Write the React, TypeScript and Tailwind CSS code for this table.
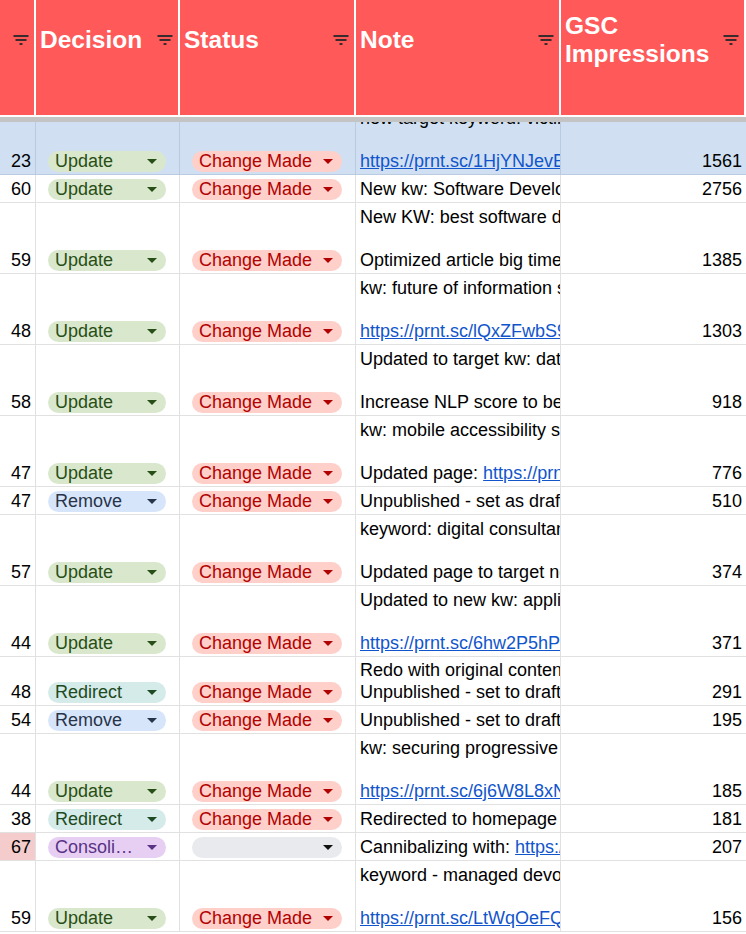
import React from "react";

type Line = { t?: string; l?: string };
type Row = {
  n: number;
  lines: 1 | 2 | 3;
  d: string;
  s?: string;
  note: Line[];
  g: string;
  sel?: boolean;
  flag?: boolean;
};

const rows: Row[] = [
  { n: 23, lines: 3, d: "Update", s: "Change Made", note: [{ t: "new target keyword: victim" }, {}, { l: "https://prnt.sc/1HjYNJevE" }], g: "1561", sel: true },
  { n: 60, lines: 1, d: "Update", s: "Change Made", note: [{ t: "New kw: Software Development" }], g: "2756" },
  { n: 59, lines: 3, d: "Update", s: "Change Made", note: [{ t: "New KW: best software dev" }, {}, { t: "Optimized article big time" }], g: "1385" },
  { n: 48, lines: 3, d: "Update", s: "Change Made", note: [{ t: "kw: future of information sec" }, {}, { l: "https://prnt.sc/lQxZFwbS9x" }], g: "1303" },
  { n: 58, lines: 3, d: "Update", s: "Change Made", note: [{ t: "Updated to target kw: data" }, {}, { t: "Increase NLP score to better" }], g: "918" },
  { n: 47, lines: 3, d: "Update", s: "Change Made", note: [{ t: "kw: mobile accessibility std" }, {}, { t: "Updated page: ", l: "https://prnt.sc" }], g: "776" },
  { n: 47, lines: 1, d: "Remove", s: "Change Made", note: [{ t: "Unpublished - set as draft" }], g: "510" },
  { n: 57, lines: 3, d: "Update", s: "Change Made", note: [{ t: "keyword: digital consultancy" }, {}, { t: "Updated page to target new" }], g: "374" },
  { n: 44, lines: 3, d: "Update", s: "Change Made", note: [{ t: "Updated to new kw: applic" }, {}, { l: "https://prnt.sc/6hw2P5hPi" }], g: "371" },
  { n: 48, lines: 2, d: "Redirect", s: "Change Made", note: [{ t: "Redo with original content" }, { t: "Unpublished - set to draft" }], g: "291" },
  { n: 54, lines: 1, d: "Remove", s: "Change Made", note: [{ t: "Unpublished - set to draft" }], g: "195" },
  { n: 44, lines: 3, d: "Update", s: "Change Made", note: [{ t: "kw: securing progressive web" }, {}, { l: "https://prnt.sc/6j6W8L8xN" }], g: "185" },
  { n: 38, lines: 1, d: "Redirect", s: "Change Made", note: [{ t: "Redirected to homepage" }], g: "181" },
  { n: 67, lines: 1, d: "Consolidate", note: [{ t: "Cannibalizing with: ", l: "https://prnt.sc" }], g: "207", flag: true },
  { n: 59, lines: 3, d: "Update", s: "Change Made", note: [{ t: "keyword - managed devops" }, {}, { l: "https://prnt.sc/LtWqOeFQ" }], g: "156" },
];

const chipColors: Record<string, string> = {
  Update: "bg-[#d9e8cc] text-[#284e17]",
  Remove: "bg-[#d7e5fa] text-[#27344a]",
  Redirect: "bg-[#d5ebe9] text-[#1d4a22]",
  Consolidate: "bg-[#e6cff2] text-[#5a3286]",
  "Change Made": "bg-[#ffcfc9] text-[#b10202]",
  empty: "bg-[#e8eaed] text-[#111111]",
};

const rowHeights = { 1: "h-[27px]", 2: "h-[48px]", 3: "h-[70px]" };

function FilterIcon() {
  return (
    <svg width="16" height="11" viewBox="0 0 16 11" className="shrink-0 fill-[#3a2c2c]">
      <rect x="0.5" y="0" width="15" height="2" />
      <rect x="2.5" y="4" width="11" height="2" />
      <rect x="6.5" y="8" width="3" height="2" />
    </svg>
  );
}

function Chip({ label, width }: { label?: string; width: string }) {
  const color = chipColors[label ?? "empty"];
  return (
    <div className={`flex h-[21px] items-center rounded-full pl-[7px] pr-[9px] ${width} ${color}`}>
      <span className="min-w-0 flex-1 truncate leading-[21px]">{label ?? ""}</span>
      <svg width="10" height="5" viewBox="0 0 10 5" className="ml-[8px] shrink-0 fill-current">
        <polygon points="0,0 10,0 5,5" />
      </svg>
    </div>
  );
}

function HeaderCell({ title, width }: { title?: string; width: string }) {
  return (
    <div className={`${width} shrink-0 border-r-2 border-white bg-[#ff5959]`}>
      <div className="flex h-[80px] items-center pl-[4px] pr-[5px]">
        <div className="min-w-0 flex-1 text-[24.5px] font-bold leading-[28px] text-white">{title}</div>
        <FilterIcon />
      </div>
    </div>
  );
}

export default function App() {
  return (
    <div
      className="h-[934px] w-[746px] overflow-hidden bg-white text-[18px] text-black"
      style={{ fontFamily: '"Liberation Sans", Arial, sans-serif' }}
    >
      <div className="flex h-[115px]">
        <HeaderCell width="w-[36px]" />
        <HeaderCell title="Decision" width="w-[144px]" />
        <HeaderCell title="Status" width="w-[176px]" />
        <HeaderCell title="Note" width="w-[205px]" />
        <HeaderCell title="GSC Impressions" width="flex-1" />
      </div>
      <div className="h-[2px] bg-white" />
      <div className="h-[5px] bg-[#c4c4c4]" />

      <div className="overflow-hidden">
        {rows.map((r, i) => {
          const line = r.sel ? "border-[#b9cbe1]" : "border-[#e1e1e1]";
          const cell = `flex shrink-0 items-end border-r pb-[2px] ${line}`;
          return (
            <div
              key={i}
              className={`flex border-b ${line} ${rowHeights[r.lines]} box-content ${r.sel ? "-mt-[18px] bg-[#d0e0f2]" : ""}`}
            >
              <div className={`${cell} w-[36px] justify-end pr-[4px] leading-[21.5px] ${r.flag ? "bg-[#f4cccc]" : ""}`}>
                {r.n}
              </div>
              <div className={`${cell} w-[144px] pl-[12px]`}>
                <Chip label={r.d} width="w-[118px]" />
              </div>
              <div className={`${cell} w-[176px] pl-[12px]`}>
                <Chip label={r.s} width="w-[150px]" />
              </div>
              <div className={`${cell} w-[205px] overflow-hidden pl-[4px]`}>
                <div className="w-full">
                  {r.note.map((ln, j) => (
                    <div key={j} className="h-[21.5px] overflow-hidden whitespace-nowrap leading-[21.5px]">
                      {ln.t}
                      {ln.l && <span className="text-[#1155cc] underline">{ln.l}</span>}
                    </div>
                  ))}
                </div>
              </div>
              <div className="flex flex-1 items-end justify-end pb-[2px] pr-[4px] leading-[21.5px]">{r.g}</div>
            </div>
          );
        })}
      </div>
    </div>
  );
}
